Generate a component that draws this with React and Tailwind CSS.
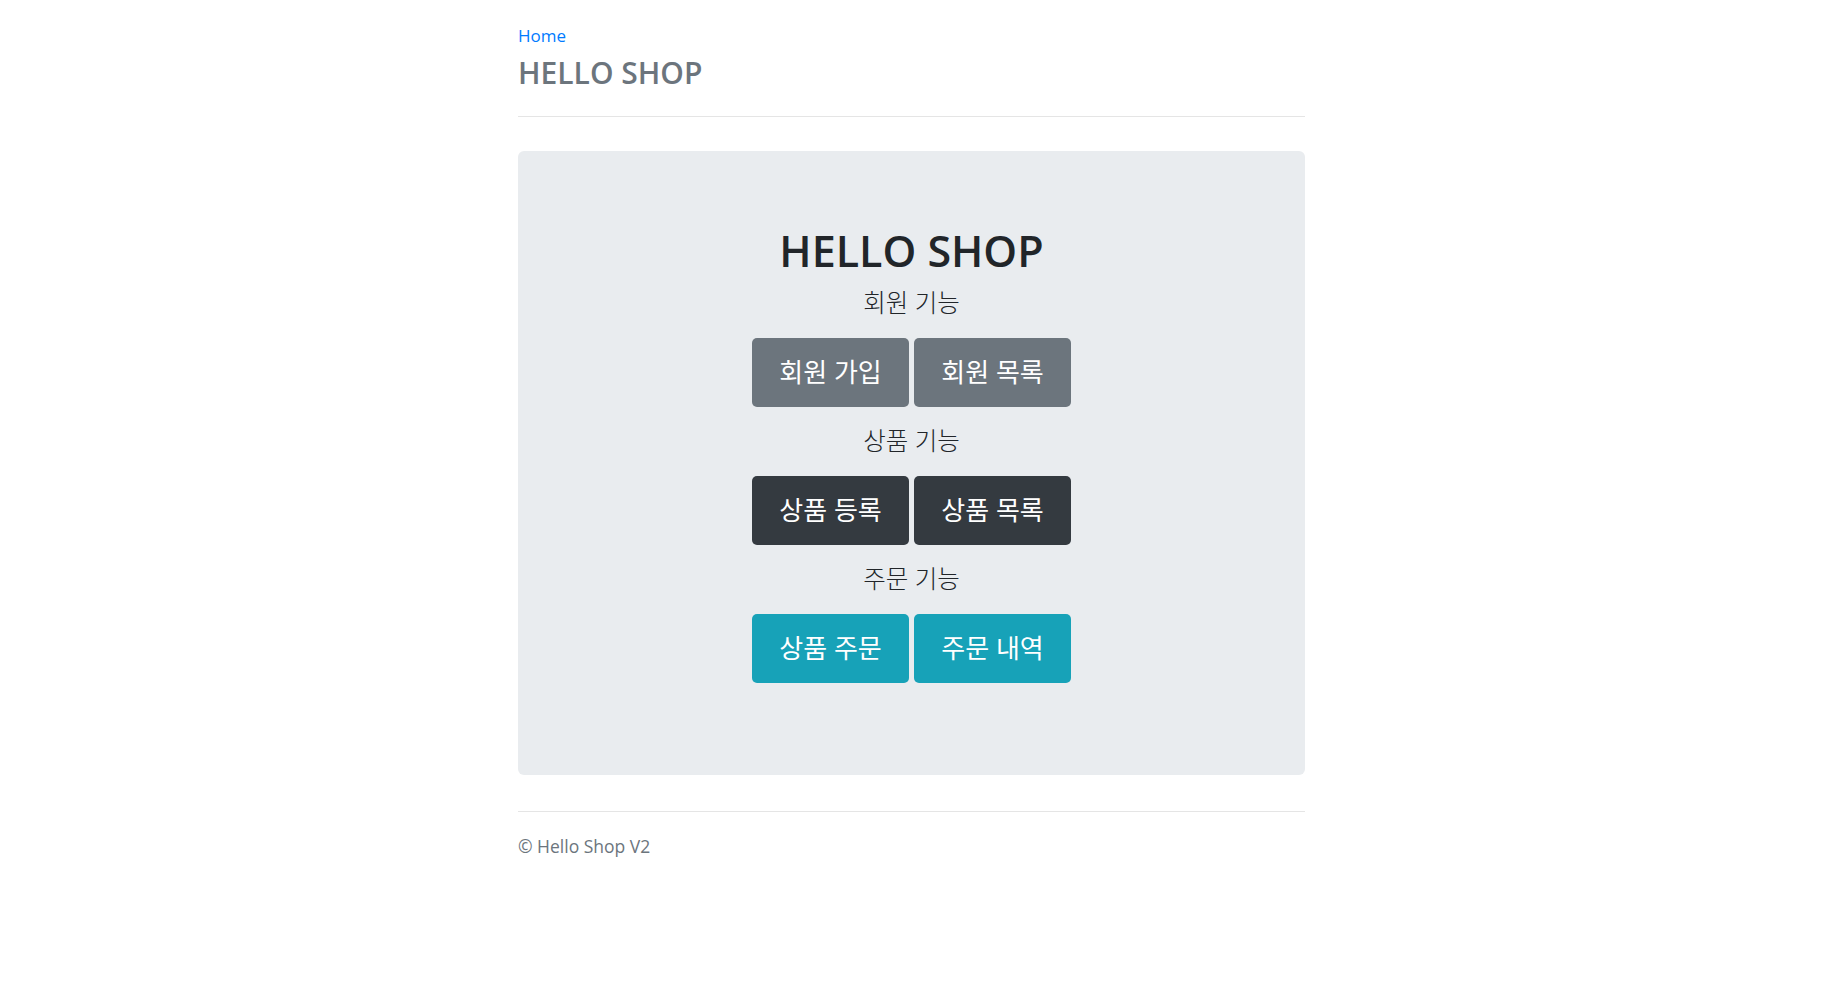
import React from "react";

const font = { fontFamily: '"Open Sans", "Noto Sans CJK KR", sans-serif' };

const sections = [
  {
    label: "회원 기능",
    color: "bg-[#6c757d]",
    buttons: ["회원 가입", "회원 목록"],
  },
  {
    label: "상품 기능",
    color: "bg-[#343a40]",
    buttons: ["상품 등록", "상품 목록"],
  },
  {
    label: "주문 기능",
    color: "bg-[#17a2b8]",
    buttons: ["상품 주문", "주문 내역"],
  },
];

const App = () => {
  return (
    <div className="min-h-screen bg-white" style={font}>
      <div className="w-[787px] mx-auto">
        {/* Header */}
        <div className="pt-[22px] pb-[24px] border-b border-[#e5e5e5]">
          <a className="block text-[17px] leading-[27px] text-[#007bff]">
            Home
          </a>
          <h3 className="mt-[5px] text-[30px] leading-[38px] font-semibold text-[#6c757d]">
            HELLO SHOP
          </h3>
        </div>

        {/* Jumbotron */}
        <div className="mt-[34px] bg-[#e9ecef] rounded-[6px] pt-[73px] pb-[92px] flex flex-col items-center">
          <h1 className="text-[43px] leading-[54px] font-semibold text-[#212529]">
            HELLO SHOP
          </h1>
          {sections.map((s, i) => (
            <div
              key={s.label}
              className={`flex flex-col items-center ${
                i === 0 ? "mt-[8px]" : "mt-[17px]"
              }`}
            >
              <p className="text-[24.5px] leading-[33px] font-light text-[#212529]">
                {s.label}
              </p>
              <div className="mt-[19px] flex gap-[5px]">
                {s.buttons.map((b) => (
                  <button
                    key={b}
                    className={`${s.color} w-[157px] h-[69px] rounded-[5px] text-white text-[26px] font-normal flex items-center justify-center`}
                  >
                    {b}
                  </button>
                ))}
              </div>
            </div>
          ))}
        </div>

        {/* Footer */}
        <div className="mt-[36px] border-t border-[#e5e5e5] pt-[21px]">
          <p className="text-[17.5px] leading-[26px] text-[#6c757d]">
            © Hello Shop V2
          </p>
        </div>
      </div>
    </div>
  );
};

export default App;
